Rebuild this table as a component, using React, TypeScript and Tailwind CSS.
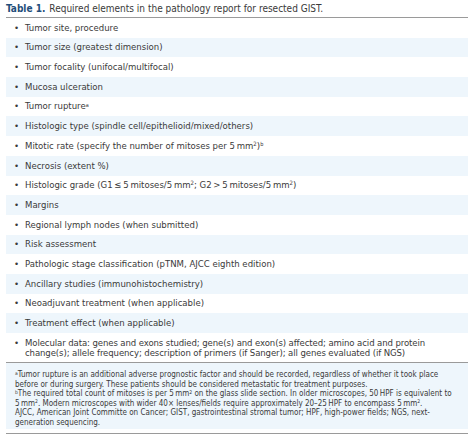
const font = { fontFamily: '"DejaVu Sans Condensed", "DejaVu Sans", sans-serif' };

const T = "\u2009";

function Sup({ children, size = "text-[6px]" }: { children: React.ReactNode; size?: string }) {
  return <sup className={`${size} leading-none`}>{children}</sup>;
}

const items: React.ReactNode[] = [
  "Tumor site, procedure",
  "Tumor size (greatest dimension)",
  "Tumor focality (unifocal/multifocal)",
  "Mucosa ulceration",
  <>
    Tumor rupture<Sup size="text-[5.5px]">a</Sup>
  </>,
  "Histologic type (spindle cell/epithelioid/mixed/others)",
  <>
    Mitotic rate (specify the number of mitoses per 5{T}mm<Sup>2</Sup>)<Sup size="text-[5.5px]">b</Sup>
  </>,
  "Necrosis (extent %)",
  <>
    Histologic grade (G1{T}≤{T}5{T}mitoses/5{T}mm<Sup>2</Sup>; G2{T}&gt;{T}5{T}mitoses/5{T}mm<Sup>2</Sup>)
  </>,
  "Margins",
  "Regional lymph nodes (when submitted)",
  "Risk assessment",
  "Pathologic stage classification (pTNM, AJCC eighth edition)",
  "Ancillary studies (immunohistochemistry)",
  "Neoadjuvant treatment (when applicable)",
  "Treatment effect (when applicable)",
];

function Row({ children, shaded }: { children: React.ReactNode; shaded: boolean }) {
  return (
    <div className={`flex h-[19.7px] items-center pl-[8px] ${shaded ? "bg-[#eef6fc]" : ""}`}>
      <span className="w-[11px] shrink-0 text-[9.5px]">•</span>
      <span>{children}</span>
    </div>
  );
}

// 5 mm² kept on one line, as in the printed table
function Mm2() {
  return (
    <span className="whitespace-nowrap">
      5{T}mm<Sup size="text-[5px]">2</Sup>
    </span>
  );
}

export default function App() {
  return (
    <div className="h-[440px] w-[474px] bg-white text-[#3a3a3a]" style={font}>
      <div className="mx-[6px] w-[462px]">
        <div className="flex h-[18px] items-center border-b-[1.5px] border-[#9a9a9a] pb-[1px] text-[10px]">
          <span className="font-bold text-[#1f4e7a]">Table 1.</span>
          <span className="ml-[4px]">Required elements in the pathology report for resected GIST.</span>
        </div>

        <div className="text-[9.5px]">
          {items.map((it, i) => (
            <Row key={i} shaded={i % 2 === 1}>
              {it}
            </Row>
          ))}
          <div className="flex items-start border-b-[1.5px] border-[#9a9a9a] pb-[4px] pl-[8px] pt-[5px] leading-[10px] tracking-[-0.1px]">
            <span className="w-[11px] shrink-0 text-[9.5px]">•</span>
            <span>
              Molecular data: genes and exons studied; gene(s) and exon(s) affected; amino acid and protein
              <br />
              change(s); allele frequency; description of primers (if Sanger); all genes evaluated (if NGS)
            </span>
          </div>
        </div>

        <div className="bg-[#eef6fc] pb-[1px] pl-[9px] pr-[8px] pt-[7px] text-[8px] leading-[9.6px]">
          <p>
            <Sup size="text-[5px]">a</Sup>Tumor rupture is an additional adverse prognostic factor and should be
            recorded, regardless of whether it took place before or during surgery. These patients should be
            considered metastatic for treatment purposes.
          </p>
          <p>
            <Sup size="text-[5px]">b</Sup>The required total count of mitoses is per <Mm2 /> on the glass slide
            section. In older microscopes, 50{T}HPF is equivalent to <Mm2 />. Modern microscopes with wider 40×
            lenses/fields require approximately 20–25{T}HPF to encompass <Mm2 />.
          </p>
          <p>
            AJCC, American Joint Committe on Cancer; GIST, gastrointestinal stromal tumor; HPF, high-power fields;
            NGS, next-generation sequencing.
          </p>
        </div>
        <div className="mt-[4px] border-b-[1.5px] border-[#9a9a9a]" />
      </div>
    </div>
  );
}
